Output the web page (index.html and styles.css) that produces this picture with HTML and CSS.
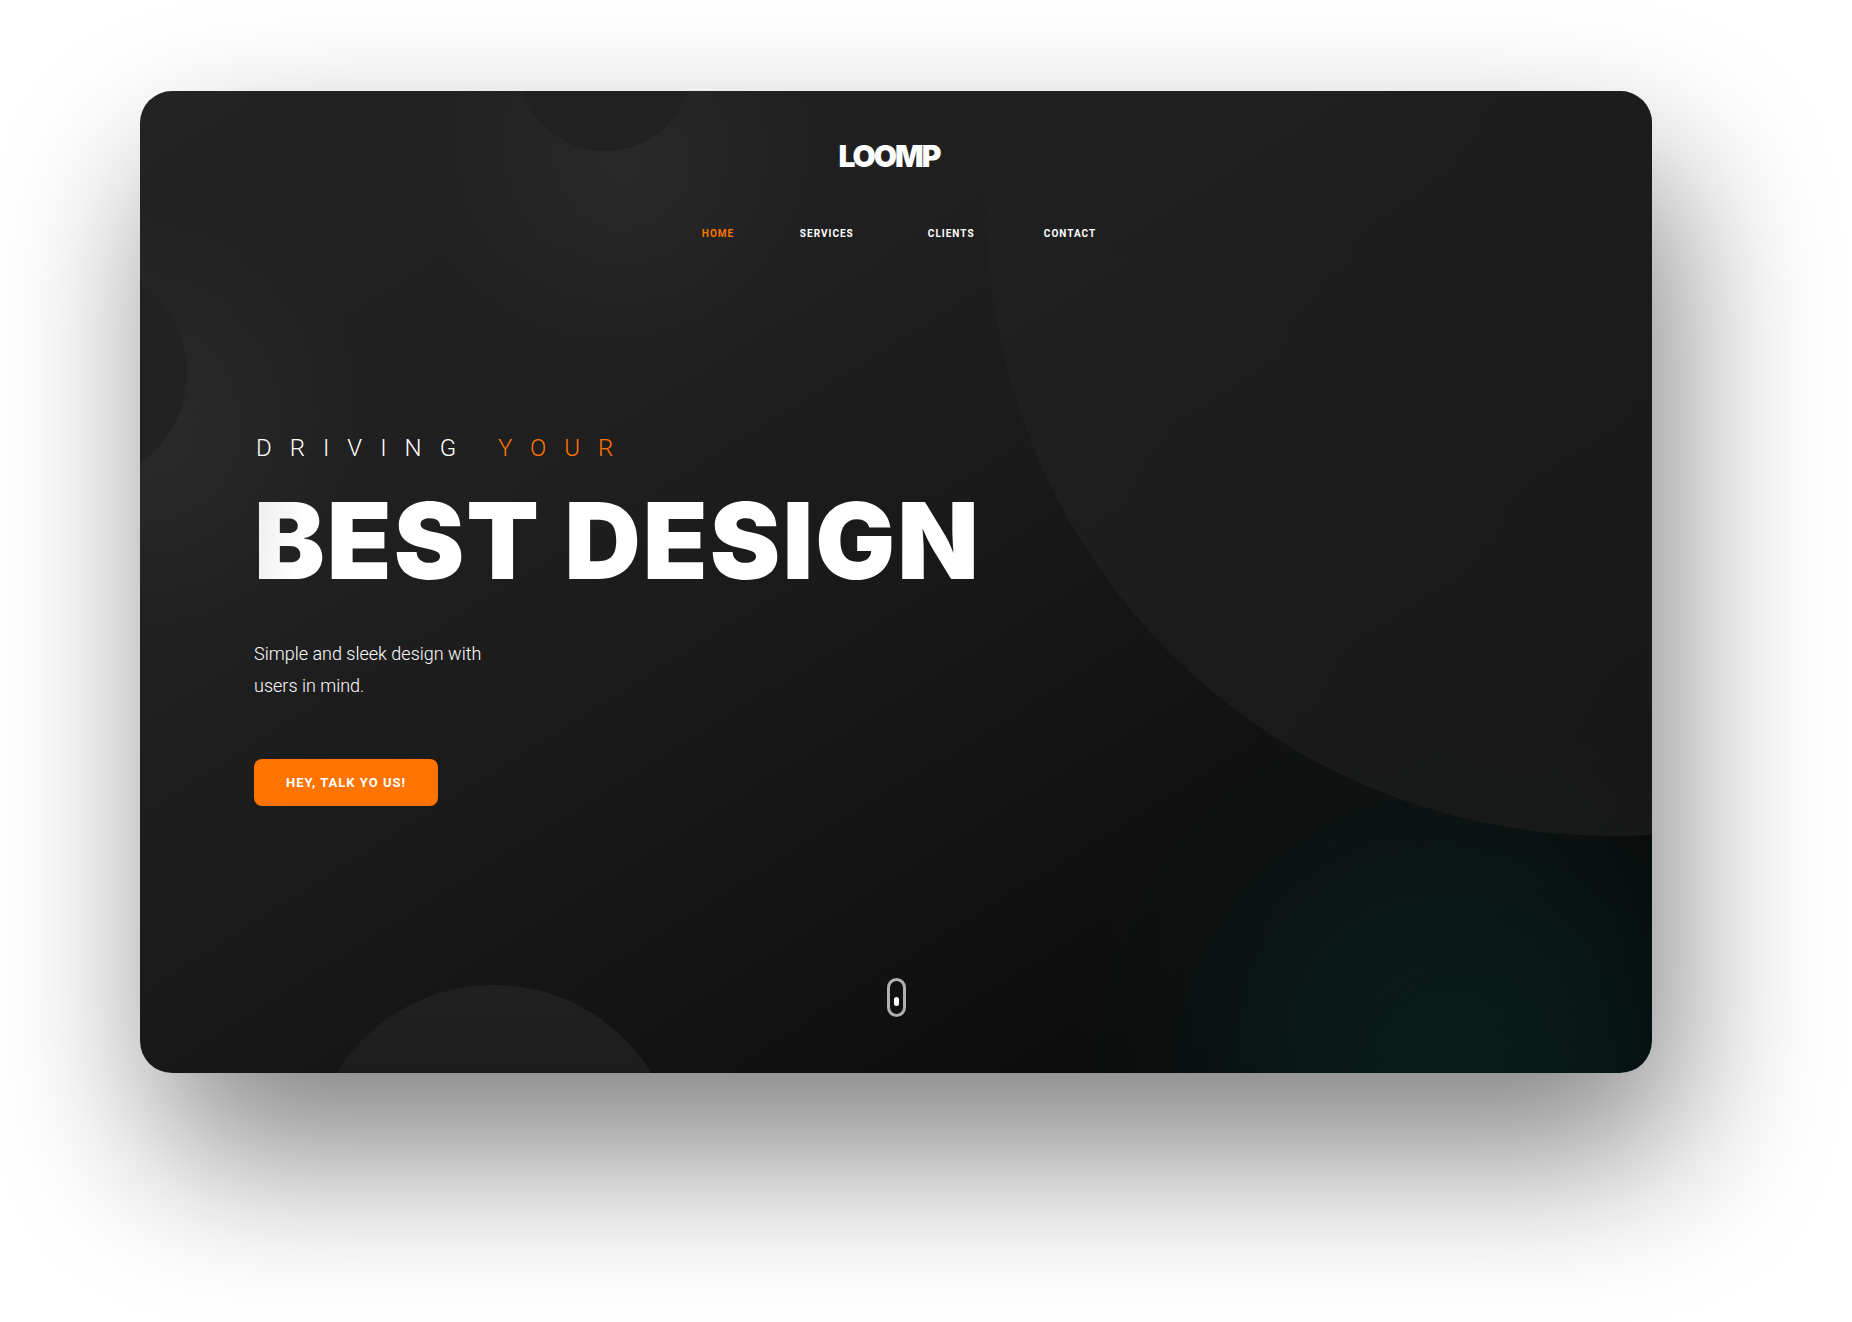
FILE: index.html
```html
<!DOCTYPE html>
<html lang="en">
<head>
  <meta charset="utf-8">
  <meta name="viewport" content="width=device-width, initial-scale=1">
  <title>Loomp</title>
  <link rel="stylesheet" href="styles.css">
</head>
<body>
  <div class="card">
    <div class="backdrop">
      <span class="orb orb-large"></span>
      <span class="orb orb-bottom"></span>
      <span class="orb orb-top"></span>
      <span class="orb orb-left"></span>
    </div>

    <header class="header">
      <a class="logo" href="#">LOOMP</a>
      <nav class="nav">
        <a class="nav-link active" href="#">HOME</a>
        <a class="nav-link" href="#services">SERVICES</a>
        <a class="nav-link" href="#clients">CLIENTS</a>
        <a class="nav-link" href="#contact">CONTACT</a>
      </nav>
    </header>

    <main class="hero">
      <p class="eyebrow">DRIVING <span class="accent">YOUR</span></p>
      <h1 class="title">BEST DESIGN</h1>
      <p class="lead">Simple and sleek design with users in mind.</p>
      <button class="cta" type="button">HEY, TALK YO US!</button>
    </main>

    <a class="scroll" href="#services" aria-label="Scroll down"><span class="scroll-dot"></span></a>
  </div>
</body>
</html>
```

FILE: styles.css
```css
* {
  box-sizing: border-box;
}

body {
  margin: 0;
  padding: 91px 200px 249px 140px;
  background: #fff;
  color: #fff;
  font-family: Roboto, "Liberation Sans", sans-serif;
  overflow-x: hidden;
}

a {
  color: inherit;
  text-decoration: none;
}

.card {
  position: relative;
  display: flex;
  flex-direction: column;
  padding: 41px 114px 56px;
  border-radius: 32px;
  box-shadow: 20px 80px 160px rgba(0, 0, 0, 0.49);
}

/* Decorative layer behind the copy */
.backdrop {
  position: absolute;
  inset: 0;
  overflow: hidden;
  border-radius: 32px;
  background:
    radial-gradient(circle 200px at 485px 75px, rgba(46, 46, 46, 0.6), rgba(46, 46, 46, 0.3) 50%, rgba(46, 46, 46, 0)),
    radial-gradient(circle 220px at 10px 340px, rgba(48, 48, 48, 0.6), rgba(48, 48, 48, 0.3) 50%, rgba(48, 48, 48, 0)),
    radial-gradient(circle 380px at 87% 100%, rgba(8, 32, 30, 0.85), rgba(8, 32, 30, 0.65) 40%, rgba(8, 32, 30, 0.2) 75%, rgba(8, 32, 30, 0)),
    linear-gradient(148deg, #232323, #1f1f1f 33%, #111 70%, #0b0b0b 85%, #020404);
}

.orb {
  position: absolute;
  border-radius: 50%;
}

.orb-large {
  top: -505px;
  right: -585px;
  width: 1250px;
  height: 1250px;
  background: linear-gradient(115deg, rgba(33, 33, 33, 0.6) 30%, rgba(26, 26, 26, 0.8) 75%);
}

.orb-bottom {
  bottom: -282px;
  left: 169px;
  width: 370px;
  height: 370px;
  background: linear-gradient(180deg, #202020, #1c1c1c 30%);
}

.orb-top {
  top: -114px;
  left: 378px;
  width: 174px;
  height: 174px;
  background: #212121;
}

.orb-left {
  top: 172px;
  left: -173px;
  width: 220px;
  height: 220px;
  background: #222;
}

.header {
  position: relative;
  display: flex;
  flex-direction: column;
  align-items: center;
  gap: 46px;
}

.logo {
  padding-right: 14px;
  font: 900 30px/48px Inter, sans-serif;
  letter-spacing: -2px;
}

.nav {
  display: grid;
  grid-template-columns: 98px 128px 116px auto;
  padding-left: 6px;
}

.nav-link {
  font-size: 10px;
  font-weight: 700;
  line-height: 16px;
  letter-spacing: 1px;
}

.active,
.accent {
  color: #ff7400;
}

.hero {
  position: relative;
  display: flex;
  flex-direction: column;
  align-items: flex-start;
  margin-top: 190px;
}

.eyebrow {
  margin: 0;
  padding-left: 2px;
  font-size: 24px;
  font-weight: 300;
  line-height: 32px;
  letter-spacing: 18px;
}

.title {
  margin: 21px 0 41px;
  background: linear-gradient(100deg, #ececec, #fff 8%);
  background-clip: text;
  -webkit-background-clip: text;
  color: transparent;
  font: 900 106px/112px Inter, sans-serif;
  letter-spacing: 2px;
}

.lead {
  max-width: 260px;
  margin: 0 0 57px;
  font-size: 18px;
  font-weight: 300;
  line-height: 32px;
}

.cta {
  height: 47px;
  padding: 0 32px;
  border: 0;
  border-radius: 8px;
  background: #ff7400;
  color: #fff;
  font: 700 13px/16px Roboto, sans-serif;
  letter-spacing: 1px;
}

.scroll {
  position: relative;
  display: flex;
  align-items: flex-end;
  justify-content: center;
  align-self: center;
  width: 19px;
  height: 39px;
  margin-top: 172px;
  padding-bottom: 8px;
  border: 3px solid #b1b1b1;
  border-radius: 10px;
}

.scroll-dot {
  width: 5px;
  height: 9px;
  border-radius: 3px;
  background: #fff;
}
```
